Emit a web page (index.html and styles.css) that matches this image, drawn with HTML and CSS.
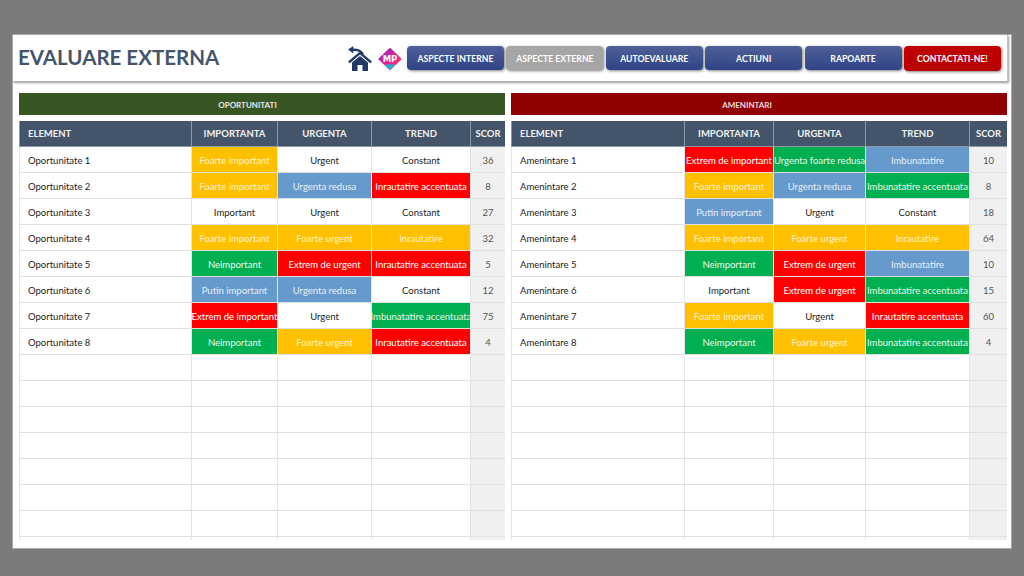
FILE: index.html
```html
<!DOCTYPE html>
<html lang="ro">
<head>
<meta charset="utf-8">
<title>Evaluare externa</title>
<link rel="stylesheet" href="styles.css">
</head>
<body>
<main class="page">
  <header class="topbar">
    <h1 class="title">EVALUARE EXTERNA</h1>
    <div class="icons">
      <svg class="home" viewBox="0 0 26 26" width="26" height="26" aria-hidden="true">
        <path d="M1 3.5 L6.5 0 L6.2 2.6 C11 2.4 15 4.2 17 8 L15 8.4 C13 5.6 10 4.6 6.2 5 L6.5 7.6 Z" fill="#1f3864"/>
        <path d="M1 15.5 L13 5.5 L25 15.5 L23.2 17.2 L13 8.6 L2.8 17.2 Z" fill="#1f3864"/>
        <path d="M5 16.5 L13 10 L21 16.5 V25 H15.5 V19 H10.5 V25 H5 Z" fill="#1f3864"/>
      </svg>
      <svg class="logo" viewBox="0 0 24 24" width="24" height="24" aria-hidden="true">
        <defs>
          <linearGradient id="mpg" x1="0" y1="0" x2="1" y2="1">
            <stop offset="0" stop-color="#7a2fd0"/>
            <stop offset="0.55" stop-color="#f0208a"/>
            <stop offset="1" stop-color="#ff3d77"/>
          </linearGradient>
        </defs>
        <path d="M12 2 L22.5 12 L12 22 L1.5 12 Z" fill="url(#mpg)" stroke="url(#mpg)" stroke-width="2" stroke-linejoin="round"/>
        <path d="M6.5 17.5 L12 23 L17.5 17.5 Z" fill="#19b5c9"/>
        <text x="12" y="15.2" text-anchor="middle" class="logo-text">MP</text>
      </svg>
    </div>
    <nav class="nav">
      <a class="btn">ASPECTE INTERNE</a>
      <a class="btn btn-current">ASPECTE EXTERNE</a>
      <a class="btn">AUTOEVALUARE</a>
      <a class="btn">ACTIUNI</a>
      <a class="btn">RAPOARTE</a>
      <a class="btn btn-red">CONTACTATI-NE!</a>
    </nav>
  </header>

  <div class="panels">
    <section class="panel panel-left">
      <div class="banner banner-green">OPORTUNITATI</div>
      <div class="sheet">
        <div class="row head"><div class="c first">ELEMENT</div><div class="c">IMPORTANTA</div><div class="c">URGENTA</div><div class="c">TREND</div><div class="c">SCOR</div></div>
        <div class="row"><div class="c first">Oportunitate 1</div><div class="c y">Foarte important</div><div class="c">Urgent</div><div class="c">Constant</div><div class="c s">36</div></div>
        <div class="row"><div class="c first">Oportunitate 2</div><div class="c y">Foarte important</div><div class="c b">Urgenta redusa</div><div class="c r">Inrautatire accentuata</div><div class="c s">8</div></div>
        <div class="row"><div class="c first">Oportunitate 3</div><div class="c">Important</div><div class="c">Urgent</div><div class="c">Constant</div><div class="c s">27</div></div>
        <div class="row"><div class="c first">Oportunitate 4</div><div class="c y">Foarte important</div><div class="c y">Foarte urgent</div><div class="c y">Inrautatire</div><div class="c s">32</div></div>
        <div class="row"><div class="c first">Oportunitate 5</div><div class="c g">Neimportant</div><div class="c r">Extrem de urgent</div><div class="c r">Inrautatire accentuata</div><div class="c s">5</div></div>
        <div class="row"><div class="c first">Oportunitate 6</div><div class="c b">Putin important</div><div class="c b">Urgenta redusa</div><div class="c">Constant</div><div class="c s">12</div></div>
        <div class="row"><div class="c first">Oportunitate 7</div><div class="c r">Extrem de important</div><div class="c">Urgent</div><div class="c g">Imbunatatire accentuata</div><div class="c s">75</div></div>
        <div class="row"><div class="c first">Oportunitate 8</div><div class="c g">Neimportant</div><div class="c y">Foarte urgent</div><div class="c r">Inrautatire accentuata</div><div class="c s">4</div></div>
        <div class="row"><div class="c"></div><div class="c"></div><div class="c"></div><div class="c"></div><div class="c s"></div></div>
        <div class="row"><div class="c"></div><div class="c"></div><div class="c"></div><div class="c"></div><div class="c s"></div></div>
        <div class="row"><div class="c"></div><div class="c"></div><div class="c"></div><div class="c"></div><div class="c s"></div></div>
        <div class="row"><div class="c"></div><div class="c"></div><div class="c"></div><div class="c"></div><div class="c s"></div></div>
        <div class="row"><div class="c"></div><div class="c"></div><div class="c"></div><div class="c"></div><div class="c s"></div></div>
        <div class="row"><div class="c"></div><div class="c"></div><div class="c"></div><div class="c"></div><div class="c s"></div></div>
        <div class="row"><div class="c"></div><div class="c"></div><div class="c"></div><div class="c"></div><div class="c s"></div></div>
        <div class="row"><div class="c"></div><div class="c"></div><div class="c"></div><div class="c"></div><div class="c s"></div></div>
      </div>
    </section>

    <section class="panel panel-right">
      <div class="banner banner-red">AMENINTARI</div>
      <div class="sheet">
        <div class="row head"><div class="c first">ELEMENT</div><div class="c">IMPORTANTA</div><div class="c">URGENTA</div><div class="c">TREND</div><div class="c">SCOR</div></div>
        <div class="row"><div class="c first">Amenintare 1</div><div class="c r">Extrem de important</div><div class="c g">Urgenta foarte redusa</div><div class="c b">Imbunatatire</div><div class="c s">10</div></div>
        <div class="row"><div class="c first">Amenintare 2</div><div class="c y">Foarte important</div><div class="c b">Urgenta redusa</div><div class="c g">Imbunatatire accentuata</div><div class="c s">8</div></div>
        <div class="row"><div class="c first">Amenintare 3</div><div class="c b">Putin important</div><div class="c">Urgent</div><div class="c">Constant</div><div class="c s">18</div></div>
        <div class="row"><div class="c first">Amenintare 4</div><div class="c y">Foarte important</div><div class="c y">Foarte urgent</div><div class="c y">Inrautatire</div><div class="c s">64</div></div>
        <div class="row"><div class="c first">Amenintare 5</div><div class="c g">Neimportant</div><div class="c r">Extrem de urgent</div><div class="c b">Imbunatatire</div><div class="c s">10</div></div>
        <div class="row"><div class="c first">Amenintare 6</div><div class="c">Important</div><div class="c r">Extrem de urgent</div><div class="c g">Imbunatatire accentuata</div><div class="c s">15</div></div>
        <div class="row"><div class="c first">Amenintare 7</div><div class="c y">Foarte important</div><div class="c">Urgent</div><div class="c r">Inrautatire accentuata</div><div class="c s">60</div></div>
        <div class="row"><div class="c first">Amenintare 8</div><div class="c g">Neimportant</div><div class="c y">Foarte urgent</div><div class="c g">Imbunatatire accentuata</div><div class="c s">4</div></div>
        <div class="row"><div class="c"></div><div class="c"></div><div class="c"></div><div class="c"></div><div class="c s"></div></div>
        <div class="row"><div class="c"></div><div class="c"></div><div class="c"></div><div class="c"></div><div class="c s"></div></div>
        <div class="row"><div class="c"></div><div class="c"></div><div class="c"></div><div class="c"></div><div class="c s"></div></div>
        <div class="row"><div class="c"></div><div class="c"></div><div class="c"></div><div class="c"></div><div class="c s"></div></div>
        <div class="row"><div class="c"></div><div class="c"></div><div class="c"></div><div class="c"></div><div class="c s"></div></div>
        <div class="row"><div class="c"></div><div class="c"></div><div class="c"></div><div class="c"></div><div class="c s"></div></div>
        <div class="row"><div class="c"></div><div class="c"></div><div class="c"></div><div class="c"></div><div class="c s"></div></div>
        <div class="row"><div class="c"></div><div class="c"></div><div class="c"></div><div class="c"></div><div class="c s"></div></div>
      </div>
    </section>
  </div>
</main>
</body>
</html>
```

FILE: styles.css
```css
* { box-sizing: border-box; }

html, body { margin: 0; height: 100%; }

body {
  background: #7b7b7b;
  padding: 35px 13px 28px;
  font-family: "Lato", "Open Sans", sans-serif;
  overflow: hidden;
}

.page {
  width: 998px;
  height: 513px;
  background: #fff;
  box-shadow: 0 0 0 1px #a8a8a8;
  display: flex;
  flex-direction: column;
  overflow: hidden;
}

.topbar {
  height: 47px;
  margin-right: 3px;
  padding: 1px 5px 0;
  display: flex;
  align-items: center;
  flex: none;
  border-right: 1px solid #c4c4c4;
  border-bottom: 1px solid #b0b0b0;
  box-shadow: 1px 1px 2px rgba(0, 0, 0, 0.4);
}

.title {
  margin: 0 0 3px;
  width: 329px;
  font-size: 20.5px;
  font-weight: 700;
  color: #44546a;
  white-space: nowrap;
  flex: none;
}

.icons {
  width: 60px;
  display: flex;
  align-items: center;
  gap: 5px;
  flex: none;
}

.home { flex: none; }
.logo { flex: none; }

.logo-text {
  font-family: "DejaVu Sans", sans-serif;
  font-size: 8.5px;
  font-weight: 700;
  fill: #fff;
}

.nav {
  display: flex;
  gap: 2.4px;
}

.btn {
  width: 97px;
  height: 24px;
  border-radius: 4px;
  display: flex;
  align-items: center;
  justify-content: center;
  color: #fff;
  font-size: 8.7px;
  font-weight: 700;
  white-space: nowrap;
  background: linear-gradient(#4f5f97, #2f4488);
  box-shadow: 1px 1px 3px rgba(0, 0, 0, 0.5);
}

.btn-current {
  background: #a6a6a6;
}

.btn-red {
  height: 25px;
  background: linear-gradient(#c00000, #b80000);
}

.panels {
  display: grid;
  grid-template-columns: 486px 496px;
  column-gap: 6px;
  padding: 11px 4px 0 6px;
  flex: 1;
  min-height: 0;
}

.panel {
  display: flex;
  flex-direction: column;
  gap: 6px;
  height: 447px;
  overflow: hidden;
}

.banner {
  height: 22px;
  flex: none;
  display: flex;
  align-items: center;
  justify-content: center;
  padding-top: 1px;
  font-size: 8px;
  font-weight: 700;
  color: #e8e8e8;
}

.banner-green { background: #375623; padding-right: 29px; }
.banner-red { background: #900000; color: #f0dcdc; padding-right: 24px; }

.sheet {
  display: flex;
  flex-direction: column;
  flex: none;
}

.row {
  display: grid;
  height: 26px;
  flex: none;
}

.panel-left .row { grid-template-columns: 172px 86px 94px 99px 35px; }
.panel-right .row { grid-template-columns: 173px 89px 92px 104px 38px; }

.c {
  min-width: 0;
  overflow: hidden;
  white-space: nowrap;
  display: flex;
  align-items: center;
  justify-content: center;
  padding-top: 1px;
  font-size: 9.5px;
  color: #222;
  border-left: 1px solid #e4e4e4;
  border-bottom: 1px solid #e0e0e0;
}

.first {
  justify-content: flex-start;
  padding-left: 8px;
}

.head .c {
  background: #44546a;
  color: #f2f2f2;
  font-weight: 700;
  font-size: 9.5px;
  padding-top: 0;
  border-left: 1px solid #8d98a8;
  border-bottom: 1px solid #8d98a8;
}

.y { background: #ffc000; color: #fff3d0; }
.b { background: #6699cc; color: #e8f0f8; }
.r { background: #ff0000; color: #fff; }
.g { background: #00b050; color: #e8f8ee; }
.s { background: #f0f0f0; color: #555; }
```
